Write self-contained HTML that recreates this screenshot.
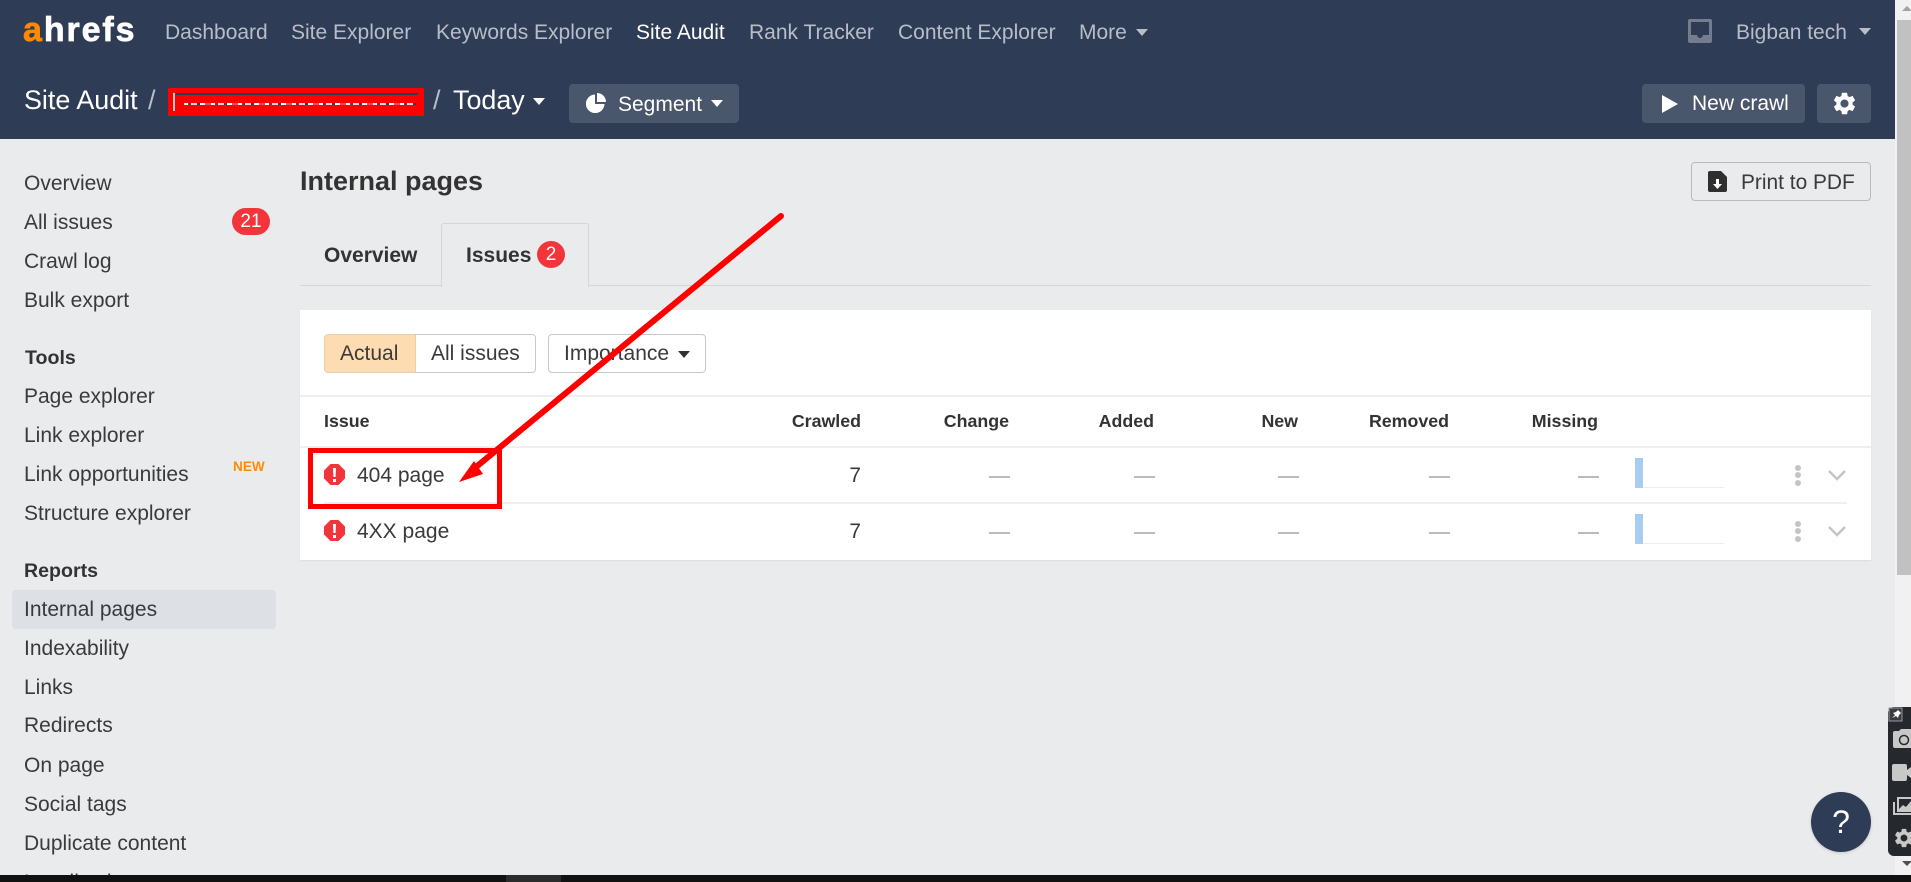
<!DOCTYPE html>
<html><head><meta charset="utf-8"><title>Internal pages</title>
<style>
html,body{margin:0;padding:0;width:1911px;height:882px;overflow:hidden;background:#eaebed}
body{font-family:"Liberation Sans",sans-serif;color:#3a3a3a;position:relative}
.a{position:absolute}
.t{position:absolute;white-space:nowrap;line-height:40px;height:40px;font-size:20.9px}
.n{color:#b8bdc8}
.w{color:#fff}
.b{font-weight:bold;color:#333}
.h{font-weight:bold;font-size:17.8px;color:#333;text-align:right;width:120px}
.r{text-align:right;width:60px}
.s{font-size:21px}
.line{position:absolute;background:#efefef;height:2px}
.dash{position:absolute;width:21px;height:1.5px;background:#bbb}
.car{position:absolute;width:0;height:0;border-left:6px solid transparent;border-right:6px solid transparent;border-top:7px solid #fff}
.btn{position:absolute;background:#4a566c;border-radius:4px}
.dot{position:absolute;width:6px;height:6px;border-radius:50%;background:#c4c4c4}
</style></head><body>
<div class="a" style="left:0;top:0;width:1895px;height:139px;background:#2e3c56"></div>
<div class="t" style="left:23px;top:10px;font-size:34px;font-weight:bold;letter-spacing:1.9px;color:#fff;-webkit-text-stroke:.7px #fff"><span style="color:#ff8800;-webkit-text-stroke:.7px #ff8800">a</span>hrefs</div>
<div class="t n" style="left:165px;top:13px;font-size:21px">Dashboard</div>
<div class="t n" style="left:291px;top:13px;font-size:21px">Site Explorer</div>
<div class="t n" style="left:436px;top:13px;font-size:21px">Keywords Explorer</div>
<div class="t w" style="left:636px;top:13px;font-size:21px">Site Audit</div>
<div class="t n" style="left:749px;top:13px;font-size:21px">Rank Tracker</div>
<div class="t n" style="left:898px;top:13px;font-size:21px">Content Explorer</div>
<div class="t n" style="left:1079px;top:13px;font-size:21px">More</div>
<div class="car" style="left:1136px;top:29px;border-top-color:#b8bdc8"></div>
<svg class="a" style="left:1688px;top:19px" width="24" height="24" viewBox="0 0 24 24"><path fill="#737d8f" fill-rule="evenodd" d="M2 0h20a2 2 0 0 1 2 2v20a2 2 0 0 1-2 2H2a2 2 0 0 1-2-2V2a2 2 0 0 1 2-2zM3 3v13h6c.5 2 1.500 3 3 3s2.500-1 3-3h6V3z"/></svg>
<div class="t n" style="left:1736px;top:13px;font-size:21px">Bigban tech</div>
<div class="car" style="left:1859px;top:28px;border-top-color:#b8bdc8"></div>

<div class="t w" style="left:24px;top:80px;font-size:26.9px">Site Audit</div>
<div class="t n" style="left:148px;top:80px;font-size:26.9px">/</div>
<div class="t n" style="left:433px;top:80px;font-size:26.9px">/</div>
<div class="t w" style="left:453px;top:80px;font-size:26.9px">Today</div>
<div class="car" style="left:533px;top:98px"></div>
<div class="a" style="left:168px;top:88px;width:256px;height:28px;background:#f00;border-radius:2px"></div>
<div class="a" style="left:173px;top:93px;width:245px;height:2px;background:#2e3c56"></div>
<div class="a" style="left:173px;top:93px;width:1.500px;height:18px;background:#e8c8d0"></div>
<div class="a" style="left:184px;top:103px;width:232px;height:2px;background:repeating-linear-gradient(90deg,#fff 0 4px,#7a3040 4px 7px,#f5d0d0 7px 13px,#2e3c56 13px 16px,#fff 16px 21px,#f44 21px 27px)"></div>

<div class="btn" style="left:569px;top:84px;width:170px;height:39px"></div>
<svg class="a" style="left:586px;top:93px" width="20" height="20" viewBox="0 0 20 20"><path fill="#fff" d="M9 1.500v9.500h9.500A9.300 9.300 0 1 1 9 1.500z"/><path fill="#fff" d="M11 0a9 9 0 0 1 9 9h-9z"/></svg>
<div class="t w" style="left:618px;top:85px;font-size:21px">Segment</div>
<div class="car" style="left:711px;top:100px"></div>
<div class="btn" style="left:1642px;top:84px;width:163px;height:39px"></div>
<svg class="a" style="left:1662px;top:95px" width="16" height="18" viewBox="0 0 16 18"><path fill="#fff" d="M0 0l16 9L0 18z"/></svg>
<div class="t w" style="left:1692px;top:84px;font-size:21px">New crawl</div>
<div class="btn" style="left:1817px;top:84px;width:54px;height:39px"></div>
<svg class="a" style="left:1831px;top:90px" width="27" height="27" viewBox="0 0 24 24"><path fill="#fff" d="M19.140 12.940c.04-.3.06-.61.06-.94 0-.32-.02-.64-.07-.94l2.030-1.580c.18-.14.23-.41.12-.61l-1.920-3.320c-.12-.22-.37-.29-.59-.22l-2.390.96c-.5-.38-1.030-.7-1.620-.94l-.36-2.540c-.04-.24-.24-.41-.48-.41h-3.840c-.24 0-.43.17-.47.41l-.36 2.540c-.59.24-1.130.57-1.620.94l-2.390-.96c-.22-.08-.47 0-.59.22L2.740 8.870c-.12.21-.08.47.12.61l2.030 1.580c-.05.3-.09.63-.09.94s.02.64.07.94l-2.030 1.580c-.18.14-.23.41-.12.61l1.920 3.320c.12.22.37.29.59.22l2.390-.96c.5.38 1.030.7 1.620.94l.36 2.540c.05.24.24.41.48.41h3.840c.24 0 .44-.17.47-.41l.36-2.540c.59-.24 1.130-.56 1.620-.94l2.390.96c.22.08.47 0 .59-.22l1.920-3.320c.12-.22.07-.47-.12-.61l-2.010-1.580zM12 15.600c-1.980 0-3.600-1.620-3.600-3.600s1.620-3.600 3.600-3.600 3.600 1.620 3.600 3.600-1.620 3.600-3.600 3.600z"/></svg>

<div class="a" style="left:12px;top:590px;width:264px;height:39px;background:#dde0e5;border-radius:4px"></div>
<div class="t s" style="left:24px;top:164px">Overview</div>
<div class="t s" style="left:24px;top:203px">All issues</div>
<div class="a" style="left:232px;top:208px;width:38px;height:27px;border-radius:14px;background:#f2353b;color:#fff;text-align:center;line-height:27px;font-size:19px">21</div>
<div class="t s" style="left:24px;top:242px">Crawl log</div>
<div class="t s" style="left:24px;top:281px">Bulk export</div>
<div class="t b" style="left:25px;top:338px;font-size:19.6px">Tools</div>
<div class="t s" style="left:24px;top:377px">Page explorer</div>
<div class="t s" style="left:24px;top:416px">Link explorer</div>
<div class="t s" style="left:24px;top:455px">Link opportunities</div>
<div class="t" style="left:233px;top:447px;font-size:13.6px;font-weight:bold;color:#ff8c00">NEW</div>
<div class="t s" style="left:24px;top:494px">Structure explorer</div>
<div class="t b" style="left:24px;top:551px;font-size:19.6px">Reports</div>
<div class="t s" style="left:24px;top:590px">Internal pages</div>
<div class="t s" style="left:24px;top:629px">Indexability</div>
<div class="t s" style="left:24px;top:668px">Links</div>
<div class="t s" style="left:24px;top:706px">Redirects</div>
<div class="t s" style="left:24px;top:746px">On page</div>
<div class="t s" style="left:24px;top:785px">Social tags</div>
<div class="t s" style="left:24px;top:824px">Duplicate content</div>
<div class="t s" style="left:24px;top:863px">Localization</div>

<div class="t b" style="left:300px;top:161px;font-size:27px">Internal pages</div>
<div class="a" style="left:1691px;top:162px;width:178px;height:37px;border:1px solid #bbb;border-radius:4px"></div>
<svg class="a" style="left:1708px;top:171px" width="19" height="21" viewBox="0 0 19 21"><path fill="#2f2f2f" d="M2 0h11l6 6v13a2 2 0 0 1-2 2H2a2 2 0 0 1-2-2V2a2 2 0 0 1 2-2z"/><path fill="#fff" d="M8 8h3v5h3l-4.500 5L5 13h3z"/></svg>
<div class="t" style="left:1741px;top:163px">Print to PDF</div>

<div class="a" style="left:300px;top:285px;width:1571px;height:1px;background:#d4d6d9"></div>
<div class="a" style="left:441px;top:223px;width:146px;height:63px;border:1px solid #d4d6d9;border-bottom:0;border-radius:3px 3px 0 0;background:#eaebed"></div>
<div class="t b" style="left:324px;top:236px;font-size:21px">Overview</div>
<div class="t b" style="left:466px;top:236px;font-size:21px">Issues</div>
<div class="a" style="left:537px;top:241px;width:28px;height:27px;border-radius:50%;background:#f2353b;color:#fff;text-align:center;line-height:27px;font-size:19px">2</div>

<div class="a" style="left:300px;top:310px;width:1571px;height:250px;background:#fff;box-shadow:0 1px 1px #ddd"></div>
<div class="a" style="left:324px;top:334px;width:90px;height:37px;background:#fddcb2;border:1px solid #e9cfa9;border-radius:4px 0 0 4px"></div>
<div class="a" style="left:415px;top:334px;width:120px;height:37px;border:1px solid #c8c8c8;border-left:0;border-radius:0 4px 4px 0"></div>
<div class="a" style="left:548px;top:334px;width:156px;height:37px;border:1px solid #c8c8c8;border-radius:4px"></div>
<div class="t" style="left:340px;top:334px;font-size:21px">Actual</div>
<div class="t" style="left:431px;top:334px;font-size:21px">All issues</div>
<div class="t" style="left:564px;top:334px;font-size:21px">Importance</div>
<div class="car" style="left:678px;top:351px;border-top-color:#333"></div>
<div class="line" style="left:300px;top:395px;width:1571px"></div>
<div class="line" style="left:300px;top:446px;width:1571px"></div>
<div class="line" style="left:324px;top:502px;width:1523px"></div>

<div class="t h" style="left:324px;top:401px;text-align:left">Issue</div>
<div class="t h" style="left:741px;top:401px">Crawled</div>
<div class="t h" style="left:889px;top:401px">Change</div>
<div class="t h" style="left:1034px;top:401px">Added</div>
<div class="t h" style="left:1178px;top:401px">New</div>
<div class="t h" style="left:1329px;top:401px">Removed</div>
<div class="t h" style="left:1478px;top:401px">Missing</div>

<svg class="a" style="left:324px;top:464px" width="21" height="21" viewBox="0 0 21 21"><path fill="#f2353b" d="M6.500 0h8L21 6.500v8L14.500 21h-8L0 14.500v-8z"/><path fill="#fff" d="M9 4h3l-.4 9H9.400zM9 15h3v3H9z"/></svg>
<svg class="a" style="left:324px;top:520px" width="21" height="21" viewBox="0 0 21 21"><path fill="#f2353b" d="M6.500 0h8L21 6.500v8L14.500 21h-8L0 14.500v-8z"/><path fill="#fff" d="M9 4h3l-.4 9H9.400zM9 15h3v3H9z"/></svg>
<div class="t" style="left:357px;top:456px;font-size:21px">404 page</div>
<div class="t" style="left:357px;top:512px;font-size:21px">4XX page</div>
<div class="t r" style="left:801px;top:456px">7</div>
<div class="t r" style="left:801px;top:512px">7</div>

<div class="dash" style="left:989px;top:476px"></div><div class="dash" style="left:1134px;top:476px"></div><div class="dash" style="left:1278px;top:476px"></div><div class="dash" style="left:1429px;top:476px"></div><div class="dash" style="left:1578px;top:476px"></div>
<div class="dash" style="left:989px;top:532px"></div><div class="dash" style="left:1134px;top:532px"></div><div class="dash" style="left:1278px;top:532px"></div><div class="dash" style="left:1429px;top:532px"></div><div class="dash" style="left:1578px;top:532px"></div>

<div class="a" style="left:1635px;top:458px;width:8px;height:30px;background:#a8cdef"></div>
<div class="a" style="left:1643px;top:487px;width:81px;height:1px;background:#eee"></div>
<div class="a" style="left:1635px;top:514px;width:8px;height:30px;background:#a8cdef"></div>
<div class="a" style="left:1643px;top:543px;width:81px;height:1px;background:#eee"></div>
<div class="dot" style="left:1795px;top:465px"></div><div class="dot" style="left:1795px;top:472px"></div><div class="dot" style="left:1795px;top:480px"></div>
<div class="dot" style="left:1795px;top:521px"></div><div class="dot" style="left:1795px;top:528px"></div><div class="dot" style="left:1795px;top:536px"></div>
<svg class="a" style="left:1827px;top:469px" width="20" height="13" viewBox="0 0 20 13"><path d="M2 2l8 8 8-8" fill="none" stroke="#c4c4c4" stroke-width="2.500"/></svg>
<svg class="a" style="left:1827px;top:525px" width="20" height="13" viewBox="0 0 20 13"><path d="M2 2l8 8 8-8" fill="none" stroke="#c4c4c4" stroke-width="2.500"/></svg>

<svg class="a" style="left:0;top:0" width="1911" height="882" viewBox="0 0 1911 882">
<rect x="310.500" y="450.500" width="189" height="56" fill="none" stroke="#f00" stroke-width="5"/>
<path d="M781 216L476 467" stroke="#f00" stroke-width="6" stroke-linecap="round" fill="none"/>
<path d="M459 482L474 461L483 474z" fill="#f00"/>
</svg>

<div class="a" style="left:1811px;top:792px;width:60px;height:60px;border-radius:50%;background:#2e3c56;color:#fff;text-align:center;line-height:60px;font-size:32px;box-shadow:0 1px 3px rgba(0,0,0,.15)">?</div>

<div class="a" style="left:1895px;top:0;width:16px;height:875px;background:#f1f1f1"></div>
<div class="a" style="left:1897px;top:20px;width:14px;height:555px;background:#c1c1c1"></div>
<div class="a" style="left:1902px;top:6px;width:0;height:0;border-left:5px solid transparent;border-right:5px solid transparent;border-bottom:5px solid #a3a3a3"></div>
<div class="a" style="left:1902px;top:861px;width:0;height:0;border-left:5px solid transparent;border-right:5px solid transparent;border-top:5px solid #505050"></div>

<div class="a" style="left:1888px;top:707px;width:23px;height:149px;background:#25282d;border-radius:6px 0 0 6px"></div>
<svg class="a" style="left:1888px;top:707px" width="23" height="149" viewBox="0 0 23 149">
<rect x="1" y="1" width="13" height="13" fill="#3a3d42" stroke="#999"/>
<path d="M4 11l3-3-2-2 3-1 2-2 3 3-2 2-1 3-2-2z" fill="#fff"/>
<path fill="#c8c8c8" d="M7 24h4l2-2h10v19H7a2 2 0 0 1-2-2V26a2 2 0 0 1 2-2z"/>
<circle cx="16" cy="33" r="4.500" fill="none" stroke="#25282d" stroke-width="1.500"/>
<path fill="#c8c8c8" d="M4 59a2 2 0 0 1 2-2h11a2 2 0 0 1 2 2v4l4-3v11l-4-3v4a2 2 0 0 1-2 2H6a2 2 0 0 1-2-2z"/>
<path fill="#c8c8c8" fill-rule="evenodd" d="M9 90h14v15H9zM11 92v10l4-4 3 2 5-6v-2z"/>
<path fill="none" stroke="#c8c8c8" stroke-width="2" d="M6 95v12h17"/>
<g transform="translate(4.600 119.600) scale(.95)"><path fill="#c8c8c8" d="M19.140 12.940c.04-.3.06-.61.06-.94 0-.32-.02-.64-.07-.94l2.030-1.580c.18-.14.23-.41.12-.61l-1.920-3.320c-.12-.22-.37-.29-.59-.22l-2.390.96c-.5-.38-1.030-.7-1.620-.94l-.36-2.540c-.04-.24-.24-.41-.48-.41h-3.840c-.24 0-.43.17-.47.41l-.36 2.540c-.59.24-1.130.57-1.620.94l-2.390-.96c-.22-.08-.47 0-.59.22L2.740 8.870c-.12.21-.08.47.12.61l2.030 1.580c-.05.3-.09.63-.09.94s.02.64.07.94l-2.030 1.580c-.18.14-.23.41-.12.61l1.920 3.320c.12.22.37.29.59.22l2.390-.96c.5.38 1.030.7 1.620.94l.36 2.540c.05.24.24.41.48.41h3.840c.24 0 .44-.17.47-.41l.36-2.540c.59-.24 1.130-.56 1.620-.94l2.390.96c.22.08.47 0 .59-.22l1.920-3.320c.12-.22.07-.47-.12-.61l-2.010-1.580zM12 15.600c-1.980 0-3.600-1.620-3.600-3.600s1.620-3.600 3.600-3.600 3.600 1.620 3.600 3.600-1.620 3.600-3.600 3.600z"/></g>
</svg>

<div class="a" style="left:0;top:875px;width:1911px;height:7px;background:#111"></div>
<div class="a" style="left:506px;top:875px;width:55px;height:7px;background:#2b2b2b"></div>
</body></html>
